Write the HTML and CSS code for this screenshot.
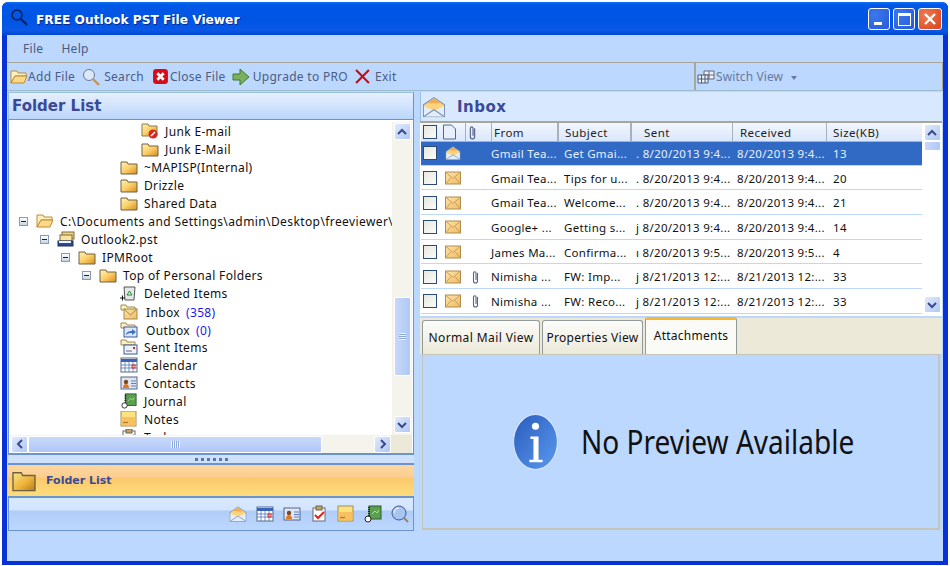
FILE: index.html

```html
<!DOCTYPE html>
<html lang="en">
<head>
  <meta charset="UTF-8" />
  <title>FREE Outlook PST File Viewer</title>
  <link rel="stylesheet" href="styles.css">
</head>
<body>

<svg class="defs" width="0" height="0">
  <defs>
    <linearGradient id="fold" x1="0" y1="0" x2="1" y2="1">
      <stop offset="0" stop-color="#fff2b8"/><stop offset=".5" stop-color="#fbcf68"/><stop offset="1" stop-color="#d98c1c"/>
    </linearGradient>
    <linearGradient id="navfold" x1="0" y1="0" x2="1" y2="1">
      <stop offset="0" stop-color="#f6e58a"/><stop offset=".55" stop-color="#eeb43a"/><stop offset="1" stop-color="#b87a18"/>
    </linearGradient>
    <linearGradient id="env" x1="0" y1="0" x2="1" y2="1">
      <stop offset="0" stop-color="#fde6a8"/><stop offset="1" stop-color="#f2b863"/>
    </linearGradient>
    <linearGradient id="ball" x1="0" y1="0" x2="1" y2="1">
      <stop offset="0" stop-color="#2a5cbc"/><stop offset="1" stop-color="#5a9af0"/>
    </linearGradient>
    <symbol id="i-folder" viewBox="0 0 18 16">
      <path d="M1 3h6l1 2h9v10H1z" fill="url(#fold)" stroke="#6e6242"/>
    </symbol>
    <symbol id="i-folder-open" viewBox="0 0 18 16">
      <path d="M1 2h6l1 2h8v3H5L1 14z" fill="#fff0c0" stroke="#c08a30"/>
      <path d="M1 14l4-7h12l-3 7z" fill="#fbd98a" stroke="#c08a30"/>
    </symbol>
    <symbol id="i-junk" viewBox="0 0 18 16">
      <path d="M1 1h6l1 2h8v10H1z" fill="url(#fold)" stroke="#8a7a50"/>
      <circle cx="12" cy="11" r="4.500" fill="#d8281c"/>
      <path d="M10 13l4-4" stroke="#fff" stroke-width="1.400"/>
    </symbol>
    <symbol id="i-pst" viewBox="0 0 18 16">
      <rect x="5" y="1" width="12" height="7" fill="#f5d27a" stroke="#7a6a40"/>
      <rect x="3" y="4" width="12" height="6" fill="#f8e2a0" stroke="#7a6a40"/>
      <rect x="1" y="10" width="15" height="5" fill="#2b4a90" stroke="#1c2f60"/>
      <rect x="2" y="10" width="12" height="2" fill="#eef2fa"/>
    </symbol>
    <symbol id="i-trash" viewBox="0 0 18 16">
      <path d="M4 2h11l-1 13H5z" fill="#e4e8e8" stroke="#555"/>
      <path d="M7 10l2.500-4 2.500 4z" fill="none" stroke="#2a8a3a"/>
      <path d="M0 13h5M2.500 10.500v5" stroke="#111"/>
    </symbol>
    <symbol id="i-inbox" viewBox="0 0 18 16">
      <path d="M1 1h5l1 2h8v3H1z" fill="#fff0c0" stroke="#a08a50"/>
      <rect x="4" y="5" width="13" height="10" fill="url(#env)" stroke="#a08a50"/>
      <path d="M4 5l6.500 6L17 5" fill="none" stroke="#a08a50"/>
    </symbol>
    <symbol id="i-outbox" viewBox="0 0 18 16">
      <path d="M1 1h5l1 2h8v3H1z" fill="#fff0c0" stroke="#a08a50"/>
      <rect x="4" y="5" width="13" height="10" fill="#dce8fa" stroke="#3a5a9a"/>
      <path d="M6 13c0-3 3-4 6-4V7l4 3-4 3v-2c-2 0-4 0-6 2z" fill="#3a70c8"/>
    </symbol>
    <symbol id="i-sent" viewBox="0 0 18 16">
      <path d="M1 1h5l1 2h8v3H1z" fill="#fff0c0" stroke="#a08a50"/>
      <rect x="4" y="6" width="13" height="9" fill="#eef2fa" stroke="#3a5a9a"/>
      <path d="M6 12h6" stroke="#667"/><rect x="13" y="8" width="2" height="2" fill="#d8281c"/>
    </symbol>
    <symbol id="i-cal" viewBox="0 0 18 16">
      <rect x="1" y="1" width="16" height="14" fill="#fff" stroke="#5a6a8a"/>
      <rect x="1" y="2" width="16" height="3" fill="#3a64b8"/>
      <path d="M1 8h16M1 11h16M5 5v10M9 5v10M13 5v10" stroke="#3a64b8" stroke-width=".7"/>
      <rect x="12" y="8" width="3" height="3" fill="none" stroke="#e02818"/>
    </symbol>
    <symbol id="i-contact" viewBox="0 0 18 16">
      <rect x="1" y="2" width="16" height="12" fill="#dfe6f2" stroke="#56648a"/>
      <circle cx="6" cy="7" r="2.200" fill="#7a4a20"/>
      <path d="M3 13c0-3 1.500-4 3-4s3 1 3 4z" fill="#e0761c"/>
      <path d="M11 6h5M11 8.500h5M11 11h5" stroke="#5a80c8"/>
    </symbol>
    <symbol id="i-journal" viewBox="0 0 18 18">
      <rect x="5" y="1" width="12" height="13" fill="#5aa050" stroke="#2c5a2c"/>
      <path d="M8 9l3-3 2 2 2-3" stroke="#a8e090" fill="none"/>
      <path d="M5 2v10" stroke="#222" stroke-dasharray="1 1" stroke-width="2"/>
      <circle cx="4" cy="14" r="3" fill="#fff" stroke="#222"/>
    </symbol>
    <symbol id="i-note" viewBox="0 0 18 16">
      <rect x="1" y="0" width="15" height="15" fill="#fbe27e" stroke="#a0905c"/>
      <rect x="1.500" y="6" width="14" height="8.500" fill="#f8c060"/>
      <path d="M3 12l2-1 1 1 2-1" stroke="#a06820" fill="none"/>
    </symbol>
    <symbol id="i-task" viewBox="0 0 18 16">
      <rect x="3" y="2" width="12" height="13" fill="#fff" stroke="#667"/>
      <rect x="6" y="0" width="6" height="4" fill="#c8a060" stroke="#665"/>
      <path d="M5 9l3 3 6-6" fill="none" stroke="#d8281c" stroke-width="2"/>
    </symbol>
    <symbol id="i-mail" viewBox="0 0 16 13">
      <rect x=".5" y=".5" width="15" height="12" fill="url(#env)" stroke="#b08c4c"/>
      <path d="M1 1l7 6 7-6M1 12l5-6M15 12l-5-6" fill="none" stroke="#c8a060"/>
    </symbol>
    <symbol id="i-mail-open" viewBox="0 0 16 14">
      <path d="M1 5.500L8 .7l7 4.800v8H1z" fill="#fbd57e" stroke="#7a92b8" stroke-width=".7"/>
      <path d="M8 1.500L3.500 4.500h9z" fill="#f8a850"/>
      <path d="M1.300 6.500L8 9.500l6.700-3v6.800H1.300z" fill="#e4edfa"/>
      <path d="M1.300 13.300L8 8.800l6.700 4.500" fill="none" stroke="#7a92b8" stroke-width=".7"/>
    </symbol>
    <symbol id="i-clip" viewBox="0 0 8 14">
      <path d="M6 3v8a2 2 0 0 1-4 0V3a1.200 1.200 0 0 1 2.500 0v7" fill="none" stroke="#56648a" stroke-width="1.100"/>
    </symbol>
    <symbol id="i-ball" viewBox="0 0 18 18">
      <circle cx="8" cy="8" r="7" fill="#a8c4f0" stroke="#3a5a9a"/>
      <path d="M3 8a5 5 0 0 1 5-5" fill="none" stroke="#fff"/>
      <path d="M13 13l4 4" stroke="#a08060" stroke-width="2"/>
    </symbol>
  </defs>
</svg>

<div class="window">
  <div class="titlebar">
    <svg class="title-icon" viewBox="0 0 18 18"><circle cx="7" cy="7" r="5" fill="none" stroke="#0b1f50" stroke-width="1.500"/><path d="M11 11l6 6" stroke="#0b1f50" stroke-width="2"/></svg>
    <span class="title-text">FREE Outlook PST File Viewer</span>
    <div class="win-buttons">
      <div class="win-btn"><span class="glyph-min"></span></div>
      <div class="win-btn"><span class="glyph-max"></span></div>
      <div class="win-btn close">
        <svg viewBox="0 0 14 14" width="14" height="14"><path d="M2 2l10 10M12 2L2 12" stroke="#fff" stroke-width="2.400"/></svg>
      </div>
    </div>
  </div>

  <div class="body">
    <div class="menubar"><span>File</span><span>Help</span></div>

    <div class="toolbar">
      <div class="tools">
        <span class="tool">
          <svg class="ico18" viewBox="0 0 18 16"><use href="#i-folder-open"/></svg>Add File
        </span>
        <span class="tool t-search">
          <svg class="ico18" viewBox="0 0 18 18"><circle cx="7" cy="7" r="5.500" fill="#dce8f8" stroke="#6a7a9a"/><path d="M11 11l6 6" stroke="#d89030" stroke-width="2.400"/></svg>Search
        </span>
        <span class="tool t-close">
          <svg class="ico16" viewBox="0 0 16 16"><rect x="1" y="1" width="14" height="14" rx="3" fill="#d80c18"/><path d="M5 5l6 6M11 5l-6 6" stroke="#fff" stroke-width="2.600"/></svg>Close File
        </span>
        <span class="tool t-up">
          <svg class="ico18" viewBox="0 0 18 18"><path d="M1 6h7V1l9 8-9 8v-5H1z" fill="#7cb060" stroke="#3c7a30"/></svg>Upgrade to PRO
        </span>
        <span class="tool t-exit">
          <svg class="ico14" viewBox="0 0 14 14"><path d="M1 1l12 12M13 1L1 13" stroke="#c80c10" stroke-width="2"/></svg>Exit
        </span>
      </div>
      <div class="switch">
        <svg class="ico18" viewBox="0 0 18 14"><path d="M7 1h10v8H7zM7 5h10M12 1v8" fill="#eef2fa" stroke="#667"/><path d="M1 5h10v8H1zM1 9h10M4.500 5v8M8 5v8" fill="#eef2fa" stroke="#4a5a7a"/></svg>
        <span>Switch View</span><i class="caret"></i>
      </div>
    </div>

    <div class="panes">
      <div class="left">
        <div class="pane-head">Folder List</div>
        <div class="tree-box">
          <div class="tree-main">
            <div class="tree">
              <div class="node l5"><svg class="ticon"><use href="#i-junk"/></svg>Junk E-mail</div>
              <div class="node l5"><svg class="ticon"><use href="#i-folder"/></svg>Junk E-Mail</div>
              <div class="node l4"><svg class="ticon"><use href="#i-folder"/></svg>~MAPISP(Internal)</div>
              <div class="node l4"><svg class="ticon"><use href="#i-folder"/></svg>Drizzle</div>
              <div class="node l4"><svg class="ticon"><use href="#i-folder"/></svg>Shared Data</div>
              <div class="node l0"><i class="minus"></i><svg class="ticon"><use href="#i-folder-open"/></svg><span class="clip-text">C:\Documents and Settings\admin\Desktop\freeviewer\</span></div>
              <div class="node l1"><i class="minus"></i><svg class="ticon"><use href="#i-pst"/></svg>Outlook2.pst</div>
              <div class="node l2"><i class="minus"></i><svg class="ticon"><use href="#i-folder"/></svg>IPMRoot</div>
              <div class="node l3"><i class="minus"></i><svg class="ticon"><use href="#i-folder"/></svg>Top of Personal Folders</div>
              <div class="node l4"><svg class="ticon"><use href="#i-trash"/></svg>Deleted Items</div>
              <div class="node l4 pad"><svg class="ticon"><use href="#i-inbox"/></svg>Inbox <b class="count">(358)</b></div>
              <div class="node l4 pad"><svg class="ticon"><use href="#i-outbox"/></svg>Outbox <b class="count">(0)</b></div>
              <div class="node l4"><svg class="ticon"><use href="#i-sent"/></svg>Sent Items</div>
              <div class="node l4"><svg class="ticon"><use href="#i-cal"/></svg>Calendar</div>
              <div class="node l4"><svg class="ticon"><use href="#i-contact"/></svg>Contacts</div>
              <div class="node l4"><svg class="ticon"><use href="#i-journal"/></svg>Journal</div>
              <div class="node l4"><svg class="ticon"><use href="#i-note"/></svg>Notes</div>
              <div class="node l4"><svg class="ticon"><use href="#i-task"/></svg>Tasks</div>
            </div>
            <div class="vbar tree-vbar">
              <div class="sb-btn"><svg viewBox="0 0 10 8" width="10" height="8"><path d="M1 6l4-4 4 4" fill="none" stroke="#3a4a8a" stroke-width="2"/></svg></div>
              <div class="sb-space tree-top"></div>
              <div class="sb-thumb tree-thumb"><i class="grip"></i></div>
              <div class="sb-space"></div>
              <div class="sb-btn"><svg viewBox="0 0 10 8" width="10" height="8"><path d="M1 2l4 4 4-4" fill="none" stroke="#3a4a8a" stroke-width="2"/></svg></div>
            </div>
          </div>
          <div class="hbar">
            <div class="sb-btn"><svg viewBox="0 0 8 10" width="8" height="10"><path d="M6 1L2 5l4 4" fill="none" stroke="#3a4a8a" stroke-width="2"/></svg></div>
            <div class="sb-thumb h-thumb"><i class="grip-h"></i></div>
            <div class="sb-space"></div>
            <div class="sb-btn"><svg viewBox="0 0 8 10" width="8" height="10"><path d="M2 1l4 4-4 4" fill="none" stroke="#3a4a8a" stroke-width="2"/></svg></div>
            <div class="corner"></div>
          </div>
        </div>
        <div class="splitter"><i></i><i></i><i></i><i></i><i></i><i></i></div>
        <div class="nav-active">
          <svg class="nav-folder" viewBox="0 0 18 16"><path d="M1 2h6l1 2h9v11H1z" fill="url(#navfold)" stroke="#6e6242"/></svg>
          <span>Folder List</span>
        </div>
        <div class="nav-icons">
          <svg class="nico"><use href="#i-mail-open"/></svg>
          <svg class="nico"><use href="#i-cal"/></svg>
          <svg class="nico"><use href="#i-contact"/></svg>
          <svg class="nico"><use href="#i-task"/></svg>
          <svg class="nico"><use href="#i-note"/></svg>
          <svg class="nico"><use href="#i-journal"/></svg>
          <svg class="nico"><use href="#i-ball"/></svg>
        </div>
      </div>

      <div class="right">
        <div class="inbox-head">
          <svg class="inbox-icon" viewBox="0 0 16 14"><use href="#i-mail-open"/></svg>
          <span>Inbox</span>
        </div>
        <div class="list">
          <div class="list-main">
            <div class="grid-head">
              <div class="hc hc-chk"><i class="check"></i></div>
              <div class="hc hc-doc"><svg viewBox="0 0 14 16" width="15" height="16"><path d="M1 1h8l4 4v10H1z" fill="#e8f0fc" stroke="#4a6a9a"/></svg></div>
              <div class="hc hc-clip"><svg viewBox="0 0 8 14" width="9" height="15"><use href="#i-clip"/></svg></div>
              <div class="hc hc-from">From</div>
              <div class="hc hc-subj">Subject</div>
              <div class="hc hc-sent">Sent</div>
              <div class="hc hc-recv">Received</div>
              <div class="hc hc-size">Size(KB)</div>
            </div>
            <div class="row sel">
              <div><i class="check"></i></div><div><svg class="env"><use href="#i-mail-open"/></svg></div><div></div>
              <div>Gmail Tea...</div><div>Get Gmai...</div><div>. 8/20/2013 9:4...</div><div>8/20/2013 9:4...</div><div>13</div>
            </div>
            <div class="row">
              <div><i class="check"></i></div><div><svg class="env"><use href="#i-mail"/></svg></div><div></div>
              <div>Gmail Tea...</div><div>Tips for u...</div><div>. 8/20/2013 9:4...</div><div>8/20/2013 9:4...</div><div>20</div>
            </div>
            <div class="row">
              <div><i class="check"></i></div><div><svg class="env"><use href="#i-mail"/></svg></div><div></div>
              <div>Gmail Tea...</div><div>Welcome...</div><div>. 8/20/2013 9:4...</div><div>8/20/2013 9:4...</div><div>21</div>
            </div>
            <div class="row">
              <div><i class="check"></i></div><div><svg class="env"><use href="#i-mail"/></svg></div><div></div>
              <div>Google+ ...</div><div>Getting s...</div><div>j 8/20/2013 9:4...</div><div>8/20/2013 9:4...</div><div>14</div>
            </div>
            <div class="row">
              <div><i class="check"></i></div><div><svg class="env"><use href="#i-mail"/></svg></div><div></div>
              <div>James Ma...</div><div>Confirma...</div><div>ı 8/20/2013 9:5...</div><div>8/20/2013 9:5...</div><div>4</div>
            </div>
            <div class="row">
              <div><i class="check"></i></div><div><svg class="env"><use href="#i-mail"/></svg></div><div><svg class="clip"><use href="#i-clip"/></svg></div>
              <div>Nimisha ...</div><div>FW: Imp...</div><div>j 8/21/2013 12:...</div><div>8/21/2013 12:...</div><div>33</div>
            </div>
            <div class="row">
              <div><i class="check"></i></div><div><svg class="env"><use href="#i-mail"/></svg></div><div><svg class="clip"><use href="#i-clip"/></svg></div>
              <div>Nimisha ...</div><div>FW: Reco...</div><div>j 8/21/2013 12:...</div><div>8/21/2013 12:...</div><div>33</div>
            </div>
          </div>
          <div class="vbar list-vbar">
            <div class="sb-btn"><svg viewBox="0 0 10 8" width="10" height="8"><path d="M1 6l4-4 4 4" fill="none" stroke="#3a4a8a" stroke-width="2"/></svg></div>
            <div class="sb-thumb list-thumb"></div>
            <div class="sb-space"></div>
            <div class="sb-btn"><svg viewBox="0 0 10 8" width="10" height="8"><path d="M1 2l4 4 4-4" fill="none" stroke="#3a4a8a" stroke-width="2"/></svg></div>
          </div>
        </div>

        <div class="tabs">
          <div class="tab t1">Normal Mail View</div>
          <div class="tab t2">Properties View</div>
          <div class="tab active">Attachments</div>
        </div>
        <div class="preview">
          <svg class="info" viewBox="0 0 44 55">
            <ellipse cx="22" cy="27.500" rx="21.500" ry="27" fill="url(#ball)" stroke="#dce8fa"/>
            <circle cx="22" cy="12" r="3.500" fill="#fff"/>
            <path d="M17 22h8v23h4v2.500H16V45h4V24.500h-3z" fill="#fff"/>
          </svg>
          <span class="no-preview">No Preview Available</span>
        </div>
      </div>
    </div>
  </div>
</div>

</body>
</html>
```

FILE: styles.css

```css
html, body {
  margin: 0;
  height: 100%;
  background: #fff;
}
body {
  font-family: "Noto Sans", sans-serif;
  font-size: 12px;
  color: #111;
  overflow: hidden;
}
i { display: block; }
.defs { position: absolute; }

.window {
  width: 946px;
  height: 563px;
  margin: 2px 0 0 2px;
  display: flex;
  flex-direction: column;
  background: #0831d9;
  border-radius: 6px 6px 0 0;
  overflow: hidden;
}

/* title bar */
.titlebar {
  height: 33px;
  flex: none;
  box-sizing: border-box;
  padding: 3px 6px 0 8px;
  display: flex;
  align-items: center;
  background: linear-gradient(#0b74f5 0, #0058e6 8%, #0054e3 55%, #0a58e8 85%, #0348d0 100%);
}
.title-icon { width: 18px; height: 18px; margin-bottom: 6px; }
.title-text {
  margin-left: 8px;
  font-family: "DejaVu Sans", sans-serif;
  font-weight: bold;
  font-size: 12.2px;
  color: #fff;
  text-shadow: 1px 1px #0a2a90;
}
.win-buttons { margin-left: auto; display: flex; gap: 3px; margin-top: -3px; }
.win-btn {
  width: 22px;
  height: 22px;
  box-sizing: border-box;
  border: 1px solid #fff;
  border-radius: 3px;
  background: radial-gradient(circle at 30% 30%, #3a78f0, #2a58d8);
  display: flex;
  align-items: center;
  justify-content: center;
  position: relative;
}
.win-btn.close { width: 24px; background: radial-gradient(circle at 30% 30%, #ee7a50, #d8431c); }
.glyph-min { position: absolute; left: 5px; bottom: 4px; width: 8px; height: 3px; background: #fff; }
.glyph-max { width: 11px; height: 9px; border: 1px solid #fff; border-top-width: 3px; margin-top: 1px; }

.body {
  flex: 1;
  display: flex;
  flex-direction: column;
  margin: 0 5px 4px 5px;
  background: #bcd8ff;
  min-height: 0;
}

/* menu and toolbar */
.menubar {
  height: 27px;
  flex: none;
  display: flex;
  align-items: center;
  gap: 18px;
  padding-left: 16px;
  color: #4a5a80;
  font-size: 12px;
  letter-spacing: .3px;
}
.toolbar {
  height: 29px;
  flex: none;
  display: flex;
  border-top: 1px solid #a8a698;
  border-bottom: 1px solid #9abccc;
  color: #4c5c84;
  letter-spacing: .3px;
  box-sizing: border-box;
}
.tools { width: 687px; display: flex; align-items: center; padding-left: 3px; box-sizing: border-box; }
.tool { display: flex; align-items: center; white-space: nowrap; }
.ico18 { width: 18px; height: 18px; flex: none; }
.ico16 { width: 17px; height: 17px; flex: none; }
.ico14 { width: 15px; height: 15px; flex: none; margin-right: 5px; }
.t-search { margin-left: 7px; }
.t-search .ico18 { margin-right: 4px; }
.t-close { margin-left: 8px; }
.t-close .ico16 { margin-right: 1px; }
.t-up { margin-left: 6px; }
.t-up .ico18 { margin-right: 3px; letter-spacing: .2px; }
.t-exit { margin-left: 7px; }
.switch {
  flex: 1;
  display: flex;
  align-items: center;
  gap: 1px;
  border-left: 2px solid #a8a698;
  border-right: 1px solid #a8a698;
  padding-left: 1px;
  color: #6a78a0;
  letter-spacing: .1px;
}
.caret {
  margin-left: 7px;
  margin-top: 2px;
  border: 3px solid transparent;
  border-top: 4px solid #6a78a0;
  border-bottom: 0;
}

/* panes */
.panes {
  flex: 1;
  display: flex;
  min-height: 0;
  padding: 1px 1px 0 1px;
  gap: 6px;
}
.left {
  width: 406px;
  flex: none;
  display: flex;
  flex-direction: column;
}
.pane-head {
  height: 28px;
  flex: none;
  box-sizing: border-box;
  padding: 4px 0 0 3px;
  background: linear-gradient(#e6f0ff, #bcd6fb);
  border-top: 1px solid #9ac0e8;
  border-left: 1px solid #9ac0e8;
  border-right: 1px solid #6a94cc;
  border-bottom: 1px solid #6a94cc;
  color: #3a4a98;
  font-family: "DejaVu Sans", sans-serif;
  font-weight: bold;
  font-size: 15px;
}
.tree-box {
  height: 335px;
  flex: none;
  box-sizing: border-box;
  background: #fff;
  border: 1px solid #6a94cc;
  border-width: 0 1px 2px 1px;
  padding: 2px 1px 0;
  display: flex;
  flex-direction: column;
}
.tree-main { flex: 1; display: flex; min-height: 0; }
.tree { flex: 1; min-width: 0; overflow: hidden; }
.node {
  height: 18px;
  box-sizing: border-box;
  display: flex;
  align-items: center;
  white-space: nowrap;
  letter-spacing: .35px;
  font-size: 12px;
}
.ticon { width: 18px; height: 16px; flex: none; margin-right: 6px; }
.node.pad { padding-top: 2px; }
.node.pad .ticon { margin-right: 8px; }
.minus {
  width: 9px;
  height: 9px;
  flex: none;
  box-sizing: border-box;
  margin-right: 8px;
  border: 1px solid #8a9ab0;
  background: linear-gradient(#fff, #c8d4e4) no-repeat;
  position: relative;
}
.minus::after { content: ""; position: absolute; left: 1px; right: 1px; top: 3px; height: 1px; background: #222; }
.l0 { padding-left: 9px; }
.l1 { padding-left: 30px; }
.l2 { padding-left: 51px; }
.l3 { padding-left: 72px; }
.l4 { padding-left: 110px; }
.l5 { padding-left: 131px; }
.clip-text { letter-spacing: .4px; }
.count { font-weight: normal; color: #1a1ae8; margin-left: 6px; }

/* scrollbars */
.vbar {
  width: 20px;
  flex: none;
  box-sizing: border-box;
  background: #f4f3ec;
  display: flex;
  flex-direction: column;
  align-items: center;
  padding: 1px 0 2px;
}
.sb-btn {
  width: 17px;
  height: 17px;
  flex: none;
  box-sizing: border-box;
  border: 1px solid #fff;
  border-radius: 2px;
  background: linear-gradient(135deg, #dfe9fd, #b0c8f4);
  display: flex;
  align-items: center;
  justify-content: center;
}
.sb-space { flex: 1; }
.tree-top { flex: none; height: 157px; }
.sb-thumb {
  box-sizing: border-box;
  border: 1px solid #fff;
  border-radius: 2px;
  background: linear-gradient(90deg, #c8d8fa, #b0c8f6);
  display: flex;
  align-items: center;
  justify-content: center;
}
.tree-thumb { width: 17px; height: 79px; }
.grip { width: 7px; height: 7px; background: repeating-linear-gradient(#eef3ff 0 1px, #8ca8e0 1px 2px); }
.hbar {
  height: 18px;
  flex: none;
  display: flex;
  align-items: center;
  background: #f4f3ec;
  padding-left: 1px;
}
.h-thumb {
  width: 294px;
  height: 17px;
  background: linear-gradient(#c8d8fa, #b0c8f6);
}
.grip-h { width: 9px; height: 7px; background: repeating-linear-gradient(90deg, #eef3ff 0 1px, #8ca8e0 1px 2px); }
.corner { width: 21px; height: 18px; background: #ece9d8; }

.splitter {
  height: 8px;
  flex: none;
  background: #cfe0fb;
  display: flex;
  align-items: center;
  justify-content: center;
  gap: 3px;
}
.splitter i { width: 3px; height: 3px; background: #5a78b0; }
.nav-active {
  height: 35px;
  flex: none;
  box-sizing: border-box;
  display: flex;
  align-items: center;
  border-top: 2px solid #6a94cc;
  border-bottom: 2px solid #6a94cc;
  background: linear-gradient(#fdd5a0 0, #fccf90 38%, #fbc96e 42%, #fedc7a 100%);
  color: #3a4a98;
  font-family: "DejaVu Sans", sans-serif;
  font-weight: bold;
  font-size: 11px;
}
.nav-folder { width: 26px; height: 22px; margin-left: 3px; margin-right: 9px; }
.nav-icons {
  height: 33px;
  flex: none;
  box-sizing: border-box;
  display: flex;
  align-items: center;
  justify-content: flex-end;
  gap: 9px;
  padding-right: 4px;
  border: 1px solid #6a94cc;
  border-top: 0;
  background: linear-gradient(#d8e8ff 0, #d4e5ff 38%, #b0cdf9 40%, #bcd8ff 100%);
}
.nico { width: 18px; height: 18px; }

.right {
  flex: 1;
  min-width: 0;
  display: flex;
  flex-direction: column;
}
.inbox-head {
  height: 29px;
  flex: none;
  box-sizing: border-box;
  display: flex;
  align-items: center;
  padding-left: 1px;
  background: #d8e8ff;
  border-left: 1px solid #9ac0e8;
  color: #3a4a98;
  font-family: "DejaVu Sans", sans-serif;
  font-weight: bold;
  font-size: 15px;
  letter-spacing: .5px;
}
.inbox-icon { width: 24px; height: 24px; margin-right: 11px; }
.list {
  height: 195px;
  flex: none;
  display: flex;
  background: #fff;
  border-top: 2px solid #a8a698;
  box-sizing: border-box;
  padding-left: 1px;
}
.list-main { flex: 1; min-width: 0; overflow: hidden; }
.list-vbar { padding: 1px 0 3px; background: #fff; }
.list-thumb { width: 17px; height: 10px; }

.grid-head {
  height: 18px;
  display: flex;
  background: linear-gradient(#f2f6fe, #dbe7fb);
  border-bottom: 1px solid #9ab4dc;
  align-items: center;
  letter-spacing: .45px;
  font-size: 11.5px;
  color: #222;
}
.hc { box-sizing: border-box; display: flex; align-items: center; height: 18px; }
.hc-chk { width: 21px; padding-left: 2px; }
.hc-doc { width: 24px; border-right: 1px solid #a8b0bc; }
.hc-clip { width: 26px; padding-left: 2px; justify-content: flex-start; border-right: 1px solid #a8b0bc; }
.hc-from { width: 67px; padding-left: 2px; border-right: 2px solid #a8b0bc; }
.hc-subj { width: 73px; padding-left: 6px; border-right: 2px solid #a8b0bc; }
.hc-sent { width: 101px; padding-left: 12px; border-right: 1px solid #a8b0bc; }
.hc-recv { width: 94px; padding-left: 7px; border-right: 1px solid #a8b0bc; }
.hc-size { padding-left: 6px; }
.check {
  width: 14px;
  height: 14px;
  box-sizing: border-box;
  border: 1px solid #2a4a7a;
  background: linear-gradient(135deg, #e8e8e0, #fbfbf8);
}
.row {
  display: grid;
  grid-template-columns: 23px 24px 23px 73px 72px 101px 96px 1fr;
  align-items: center;
  height: 22.7px;
  margin-bottom: 2px;
  box-shadow: 0 1px 0 #bcd8ff;
  white-space: nowrap;
  letter-spacing: .3px;
  font-size: 11.5px;
}
.row > div { display: flex; align-items: center; }
.row > div:first-child { padding-left: 2px; }
.row.sel { background: #316ac5; color: #e8f0fc; }
.env { width: 16px; height: 14px; margin-left: 1px; }
.clip { width: 9px; height: 14px; margin-left: 3px; }

/* tabs */
.tabs {
  height: 38px;
  flex: none;
  display: flex;
  align-items: flex-end;
  gap: 2px;
  box-sizing: border-box;
  padding-left: 2px;
  background: #ece9d8;
  border-top: 2px solid #bcd8ff;
  letter-spacing: .4px;
}
.tab {
  box-sizing: border-box;
  height: 34px;
  display: flex;
  align-items: center;
  justify-content: center;
  border: 1px solid #919b9c;
  border-bottom: 0;
  border-radius: 3px 3px 0 0;
  background: linear-gradient(#fcfcfa, #ece9d8);
}
.t1 { width: 118px; }
.t2 { width: 101px; letter-spacing: .3px; }
.tab.active {
  width: 92px;
  height: 37px;
  padding-bottom: 3px;
  background: #fafaf6;
  border-top: 3px solid #f5b830;
  letter-spacing: .25px;
}
.preview {
  height: 176px;
  flex: none;
  box-sizing: border-box;
  margin: 0 2px 0 2px;
  border: 1px solid #c4c4b8;
  border-width: 1px 2px 2px 1px;
  background: #bcd8ff;
  display: flex;
  align-items: center;
  padding-left: 90px;
  color: #111;
}
.info { width: 45px; height: 56px; margin-right: 23px; }
.no-preview {
  font-size: 33px;
  white-space: nowrap;
  transform: scaleX(.85);
  transform-origin: left center;
}
```
